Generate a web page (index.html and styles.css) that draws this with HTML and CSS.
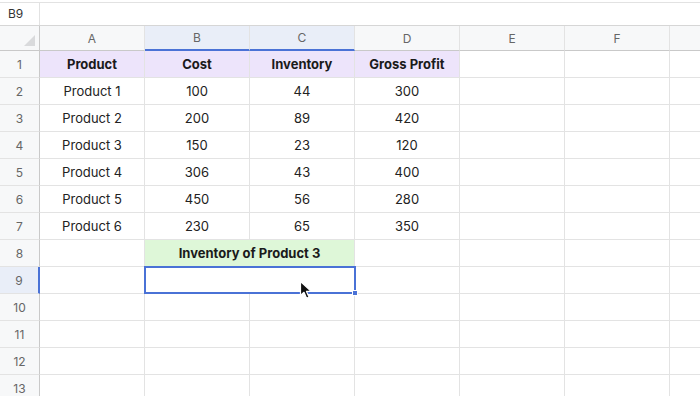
FILE: index.html
```html
<!DOCTYPE html>
<html>
<head>
<meta charset="utf-8">
<link rel="stylesheet" href="styles.css">
</head>
<body>
<div class="app">
  <div class="formula-bar">
    <div class="name-box">B9</div>
    <div class="formula-input"></div>
  </div>
  <div class="sheet">
    <div class="corner"><span class="corner-tri"></span></div>
    <div class="col-head">A</div>
    <div class="col-head sel">B</div>
    <div class="col-head sel">C</div>
    <div class="col-head">D</div>
    <div class="col-head">E</div>
    <div class="col-head">F</div>
    <div class="col-head last"></div>

    <div class="row-head">1</div>
    <div class="cell th">Product</div><div class="cell th">Cost</div><div class="cell th">Inventory</div><div class="cell th">Gross Profit</div><div class="cell"></div><div class="cell"></div><div class="cell last"></div>

    <div class="row-head">2</div>
    <div class="cell">Product 1</div><div class="cell">100</div><div class="cell">44</div><div class="cell">300</div><div class="cell"></div><div class="cell"></div><div class="cell last"></div>

    <div class="row-head">3</div>
    <div class="cell">Product 2</div><div class="cell">200</div><div class="cell">89</div><div class="cell">420</div><div class="cell"></div><div class="cell"></div><div class="cell last"></div>

    <div class="row-head">4</div>
    <div class="cell">Product 3</div><div class="cell">150</div><div class="cell">23</div><div class="cell">120</div><div class="cell"></div><div class="cell"></div><div class="cell last"></div>

    <div class="row-head">5</div>
    <div class="cell">Product 4</div><div class="cell">306</div><div class="cell">43</div><div class="cell">400</div><div class="cell"></div><div class="cell"></div><div class="cell last"></div>

    <div class="row-head">6</div>
    <div class="cell">Product 5</div><div class="cell">450</div><div class="cell">56</div><div class="cell">280</div><div class="cell"></div><div class="cell"></div><div class="cell last"></div>

    <div class="row-head">7</div>
    <div class="cell">Product 6</div><div class="cell">230</div><div class="cell">65</div><div class="cell">350</div><div class="cell"></div><div class="cell"></div><div class="cell last"></div>

    <div class="row-head">8</div>
    <div class="cell"></div><div class="cell span2 green">Inventory of Product 3</div><div class="cell"></div><div class="cell"></div><div class="cell"></div><div class="cell last"></div>

    <div class="row-head sel">9</div>
    <div class="cell"></div>
    <div class="cell span2 active">
      <span class="handle"></span>
      <svg class="pointer" width="14" height="20" viewBox="0 0 14 20"><path d="M1.5 1.5 L1.5 15.5 L5 12.3 L7.6 18.2 L10 17.1 L7.5 11.4 L12.2 11.4 Z" fill="#111" stroke="#fff" stroke-width="1.2" stroke-linejoin="round"/></svg>
    </div>
    <div class="cell"></div><div class="cell"></div><div class="cell"></div><div class="cell last"></div>

    <div class="row-head">10</div>
    <div class="cell"></div><div class="cell"></div><div class="cell"></div><div class="cell"></div><div class="cell"></div><div class="cell"></div><div class="cell last"></div>

    <div class="row-head">11</div>
    <div class="cell"></div><div class="cell"></div><div class="cell"></div><div class="cell"></div><div class="cell"></div><div class="cell"></div><div class="cell last"></div>

    <div class="row-head">12</div>
    <div class="cell"></div><div class="cell"></div><div class="cell"></div><div class="cell"></div><div class="cell"></div><div class="cell"></div><div class="cell last"></div>

    <div class="row-head">13</div>
    <div class="cell"></div><div class="cell"></div><div class="cell"></div><div class="cell"></div><div class="cell"></div><div class="cell"></div><div class="cell last"></div>
  </div>
</div>
</body>
</html>
```

FILE: styles.css
```css
* { box-sizing: border-box; }
html, body {
  margin: 0;
  padding: 0;
  background: #fff;
  width: 700px;
  height: 396px;
  overflow: hidden;
}
body {
  font-family: Inter, "Noto Sans", sans-serif;
  color: #1f1f1f;
}
.app {
  padding-top: 2px;
}
.formula-bar {
  display: flex;
  height: 24px;
  border-top: 1px solid #e2e2e2;
  border-bottom: 1px solid #d6d6d6;
}
.name-box {
  width: 40px;
  border-right: 1px solid #e2e2e2;
  font-size: 12px;
  color: #333;
  padding-left: 8px;
  line-height: 22px;
}
.formula-input { flex: 1; }

.sheet {
  display: grid;
  grid-template-columns: 40px repeat(6, 105px) 30px;
  grid-template-rows: 25px repeat(13, 27px);
}
.corner {
  background: #f7f8f9;
  border-right: 1px solid #c9c9c9;
  border-bottom: 1px solid #c9c9c9;
  position: relative;
}
.corner-tri {
  position: absolute;
  right: 4px;
  bottom: 4px;
  width: 0;
  height: 0;
  border-left: 11px solid transparent;
  border-bottom: 11px solid #d9dadc;
}
.col-head {
  background: #f7f8f9;
  border-right: 1px solid #e3e3e3;
  border-bottom: 1px solid #c9c9c9;
  font-size: 12px;
  color: #666;
  display: flex;
  align-items: center;
  justify-content: center;
}
.col-head.sel {
  background: #e9eef8;
  border-bottom: 2px solid #4a72d6;
}
.col-head.last { border-right: none; }
.row-head {
  background: #f7f8f9;
  border-right: 1px solid #c9c9c9;
  border-bottom: 1px solid #e3e3e3;
  font-size: 12px;
  color: #666;
  display: flex;
  align-items: center;
  justify-content: center;
}
.row-head.sel {
  background: #e9eef8;
  border-right: 2px solid #4a72d6;
}
.cell {
  border-right: 1px solid #e3e3e3;
  border-bottom: 1px solid #e3e3e3;
  font-size: 13px;
  display: flex;
  align-items: center;
  justify-content: center;
  color: #222;
}
.cell.last { border-right: none; }
.cell.th {
  background: #ede4fb;
  font-weight: 700;
  color: #1a1a1a;
}
.cell.span2 { grid-column: span 2; }
.cell.green {
  background: #def7d8;
  font-weight: 700;
  color: #1a1a1a;
}
.cell.active {
  position: relative;
  border: 2px solid #4a72d6;
  margin: -1px -1px 0 -1px;
}
.handle {
  position: absolute;
  right: -4px;
  bottom: -4px;
  width: 6px;
  height: 6px;
  background: #4a72d6;
  border: 1px solid #fff;
}
.pointer {
  position: absolute;
  left: 153px;
  top: 12px;
}
```
